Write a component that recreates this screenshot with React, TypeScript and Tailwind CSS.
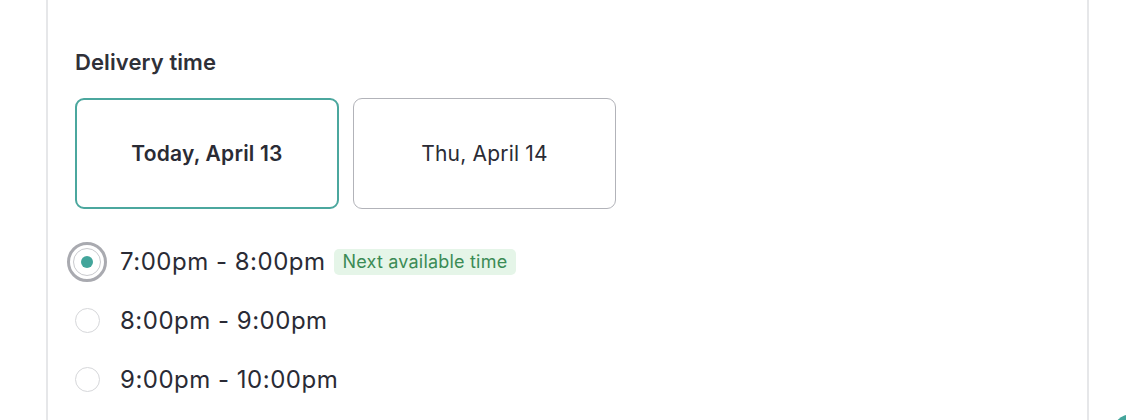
import React, { useState } from 'react';

const days = ['Today, April 13', 'Thu, April 14'];

const slots = [
  { label: '7:00pm - 8:00pm', badge: 'Next available time' },
  { label: '8:00pm - 9:00pm' },
  { label: '9:00pm - 10:00pm' },
];

const Radio: React.FC<{ checked: boolean }> = ({ checked }) => {
  if (checked) {
    return (
      <span className="flex h-[40px] w-[40px] items-center justify-center rounded-full border-[3px] border-[#a9aab0]">
        <span className="flex h-[28px] w-[28px] items-center justify-center rounded-full border border-[#c9cace]">
          <span className="h-[12px] w-[12px] rounded-full bg-[#43a59b]" />
        </span>
      </span>
    );
  }
  return (
    <span className="flex h-[40px] w-[40px] items-center justify-center">
      <span className="h-[25px] w-[25px] rounded-full border-[1.5px] border-[#d6d7da]" />
    </span>
  );
};

export default function App() {
  const [day, setDay] = useState(0);
  const [slot, setSlot] = useState(0);

  return (
    <div className="relative h-[420px] w-full overflow-hidden bg-white font-['Inter',sans-serif] text-[#2a2b35]">
      <div className="ml-[46px] h-full w-[1043px] border-x-2 border-[#e6e7e9] pl-[27px] pt-[48px]">
        <h2 className="text-[22px] font-semibold leading-[28px] tracking-[0.1px] text-[#2f3038]">Delivery time</h2>

        <div className="mt-[22px] flex gap-[14px]">
          {days.map((d, i) => (
            <button
              key={d}
              onClick={() => setDay(i)}
              className={
                i === day
                  ? 'flex h-[111px] w-[264px] items-center justify-center rounded-[9px] border-[2.5px] border-[#4ba79e] text-[21px] font-semibold tracking-[0.2px] text-[#2a2b35]'
                  : 'flex h-[111px] w-[263px] items-center justify-center rounded-[9px] border-[1.5px] border-[#b2b3b9] text-[21px] font-normal tracking-[0.2px] text-[#2a2b35]'
              }
            >
              {d}
            </button>
          ))}
        </div>

        <div className="mt-[23px] flex flex-col">
          {slots.map((s, i) => (
            <button key={s.label} onClick={() => setSlot(i)} className="-ml-[8px] flex h-[59px] items-center text-left">
              <Radio checked={i === slot} />
              <span className="ml-[13px] text-[24px] leading-none tracking-[0.5px] text-[#2a2b35]">{s.label}</span>
              {s.badge && (
                <span className="ml-[8px] rounded-[5px] bg-[#e5f5e8] px-[9px] py-[3px] text-[18px] leading-[20px] tracking-[0.2px] text-[#3b8b55]">
                  {s.badge}
                </span>
              )}
            </button>
          ))}
        </div>
      </div>

      <span className="absolute -bottom-[34px] -right-[26px] h-[40px] w-[40px] rounded-full bg-[#43a59b]" />
    </div>
  );
}
